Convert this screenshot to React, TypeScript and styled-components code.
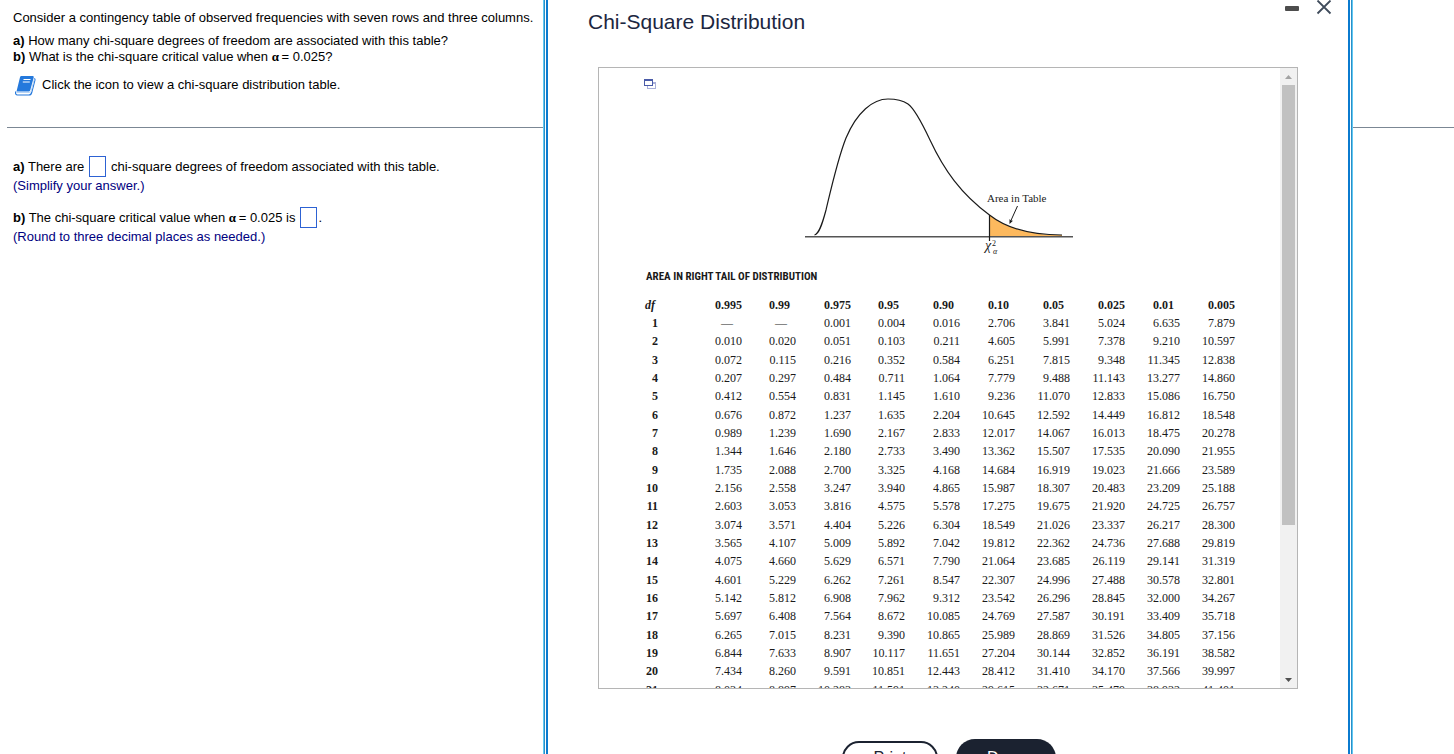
import React from "react";
import styled, { createGlobalStyle } from "styled-components";

const GlobalStyle = createGlobalStyle`
  *, *::before, *::after { box-sizing: border-box; }
  body { margin: 0; background: #fff; color: #000; font-family: "Liberation Sans", Arial, sans-serif; font-size: 13px; }
  p, h1, h2 { margin: 0; }
`;

const Page = styled.div`
  position: relative;
  height: 100vh;
  overflow: hidden;
`;

const Question = styled.section`
  height: 128px;
  margin-left: 7px;
  padding: 10px 0 0 6px;
  border-bottom: 1px solid #7b8794;
  line-height: 16px;
`;

const Prompt = styled.p`
  margin-bottom: 7px;
`;

const TableLink = styled.button`
  display: flex;
  align-items: flex-start;
  gap: 6px;
  margin-top: 11px;
  padding: 0 0 0 2px;
  border: 0;
  background: none;
  color: inherit;
  font: inherit;
  line-height: 18px;
  cursor: pointer;
`;

const Answers = styled.section`
  display: flex;
  flex-direction: column;
  gap: 12px;
  padding: 28px 0 0 13px;
`;

const AnswerLine = styled.label`
  display: flex;
  align-items: center;
  height: 21px;
  white-space: pre;
`;

const AnswerBox = styled.input`
  width: 17px;
  height: 21px;
  margin: 0 1px 0 5px;
  padding: 0;
  border: 1px solid #2d62d3;
  border-radius: 0;
  background: #fff;
  font: inherit;
`;

const Hint = styled.p`
  line-height: 18px;
  color: #000080;
`;

const Alpha = styled.span`
  font-family: "Liberation Serif", "Times New Roman", serif;
  font-size: 13px;
  font-weight: 700;
`;

const Overlay = styled.div`
  position: absolute;
  inset: 0;
  display: flex;
  padding: 0 101px 0 543px;
  pointer-events: none;
`;

const Dialog = styled.div`
  flex: 1;
  display: flex;
  flex-direction: column;
  min-width: 0;
  padding: 0 2px;
  border: solid #62c8f2;
  border-width: 0 1px;
  background: #fff;
  box-shadow: inset 1px 0 #2a8fc8, inset -1px 0 #2a8fc8;
  pointer-events: auto;
`;

const DialogFrame = styled.div`
  flex: 1;
  display: flex;
  flex-direction: column;
  padding: 0 50px;
  border: solid #0b7bcf;
  border-width: 0 2px;
`;

const DialogHeader = styled.header`
  display: flex;
  justify-content: space-between;
  height: 67px;
  margin: 0 -35px 0 -10px;
`;

const Title = styled.h1`
  padding-top: 8px;
  font-size: 21px;
  font-weight: 400;
  line-height: 28px;
  color: #1c2640;
`;

const WindowButtons = styled.div`
  display: flex;
  align-items: flex-start;
  gap: 17px;
  padding-right: 1px;
`;

const IconButton = styled.button`
  display: flex;
  padding: 0;
  border: 0;
  background: none;
  cursor: pointer;
`;

const Viewer = styled.div`
  display: flex;
  height: 622px;
  border: 1px solid #b5b5b5;
`;

const Sheet = styled.div`
  flex: 1;
  min-width: 0;
  overflow: hidden;
  padding: 11px 0 0 45px;
  color: #1a1a1a;
  font-family: "Liberation Serif", "Times New Roman", serif;
`;

const Chart = styled.svg`
  display: block;
  margin-left: 160px;
`;

const TableTitle = styled.h2`
  margin: 9px 0 10px 2px;
  font-family: "Roboto Condensed", "Arial Narrow", sans-serif;
  font-size: 11px;
  line-height: 18px;
`;

const DataTable = styled.table`
  border-collapse: collapse;
  table-layout: fixed;
  width: 591px;
  font-size: 12px;
  line-height: 18px;

  tr { height: 18px; }
  tbody tr:nth-child(3n) { height: 19px; }
`;

const HeadCell = styled.th`
  padding: 0;
  text-align: right;

  span {
    display: inline-block;
    width: 27px;
    text-align: left;
  }
`;

const DfHead = styled.th`
  padding: 0 0 0 1px;
  text-align: left;
  font-style: italic;
`;

const DfCell = styled.th`
  padding: 0;
  text-align: right;
`;

const Cell = styled.td`
  padding: 0;
  text-align: right;
`;

const Dash = styled.td`
  padding: 0 9px 0 0;
  text-align: right;
`;

const Scrollbar = styled.div`
  display: flex;
  flex-direction: column;
  align-items: center;
  width: 17px;
  background: #f1f1f1;
`;

const ScrollButton = styled.button`
  display: flex;
  align-items: center;
  justify-content: center;
  width: 17px;
  height: 17px;
  padding: 0;
  border: 0;
  background: none;
`;

const ScrollTrack = styled.div`
  flex: 1;
  width: 13px;
`;

const ScrollThumb = styled.div`
  height: 75%;
  background: #c1c1c1;
`;

const Actions = styled.footer`
  display: flex;
  justify-content: center;
  align-items: center;
  gap: 18px;
  margin-top: 50px;
  padding-left: 2px;
`;

const ActionButton = styled.button<{ $primary?: boolean }>`
  width: ${(p) => (p.$primary ? 100 : 96)}px;
  height: ${(p) => (p.$primary ? 38 : 34)}px;
  border: ${(p) => (p.$primary ? "0" : "2px solid #1b2230")};
  border-radius: 19px;
  background: ${(p) => (p.$primary ? "#1b2230" : "#fff")};
  color: ${(p) => (p.$primary ? "#fff" : "#1b2230")};
  font-family: inherit;
  font-size: 16px;
  line-height: 20px;
  cursor: pointer;
`;

const areas = ["0.995", "0.99", "0.975", "0.95", "0.90", "0.10", "0.05", "0.025", "0.01", "0.005"];
const columnWidths = [84, 54, 55, 54, 55, 55, 55, 55, 55, 55];

const rows = `— — 0.001 0.004 0.016 2.706 3.841 5.024 6.635 7.879
0.010 0.020 0.051 0.103 0.211 4.605 5.991 7.378 9.210 10.597
0.072 0.115 0.216 0.352 0.584 6.251 7.815 9.348 11.345 12.838
0.207 0.297 0.484 0.711 1.064 7.779 9.488 11.143 13.277 14.860
0.412 0.554 0.831 1.145 1.610 9.236 11.070 12.833 15.086 16.750
0.676 0.872 1.237 1.635 2.204 10.645 12.592 14.449 16.812 18.548
0.989 1.239 1.690 2.167 2.833 12.017 14.067 16.013 18.475 20.278
1.344 1.646 2.180 2.733 3.490 13.362 15.507 17.535 20.090 21.955
1.735 2.088 2.700 3.325 4.168 14.684 16.919 19.023 21.666 23.589
2.156 2.558 3.247 3.940 4.865 15.987 18.307 20.483 23.209 25.188
2.603 3.053 3.816 4.575 5.578 17.275 19.675 21.920 24.725 26.757
3.074 3.571 4.404 5.226 6.304 18.549 21.026 23.337 26.217 28.300
3.565 4.107 5.009 5.892 7.042 19.812 22.362 24.736 27.688 29.819
4.075 4.660 5.629 6.571 7.790 21.064 23.685 26.119 29.141 31.319
4.601 5.229 6.262 7.261 8.547 22.307 24.996 27.488 30.578 32.801
5.142 5.812 6.908 7.962 9.312 23.542 26.296 28.845 32.000 34.267
5.697 6.408 7.564 8.672 10.085 24.769 27.587 30.191 33.409 35.718
6.265 7.015 8.231 9.390 10.865 25.989 28.869 31.526 34.805 37.156
6.844 7.633 8.907 10.117 11.651 27.204 30.144 32.852 36.191 38.582
7.434 8.260 9.591 10.851 12.443 28.412 31.410 34.170 37.566 39.997
8.034 8.897 10.283 11.591 13.240 29.615 32.671 35.479 38.932 41.401`
  .split("\n")
  .map((line) => line.split(" "));

const BookIcon = () => (
  <svg width="21" height="20" viewBox="0 0 21 20" aria-hidden="true">
    <path d="M6.500 0H17.500C18.500 0 19 .7 18.700 1.600L15.300 14C15 15 14.300 15.500 13.500 15.500H1.500L5 1.300C5.200.5 5.800 0 6.500 0Z" fill="#2579dc" />
    <path d="M19.300 2.500C20 3 20.100 3.500 19.900 4.200L16.700 16.500C16.300 18.200 15.500 19 14 19H2.500C.9 19 .1 17.500.8 15.500" fill="none" stroke="#2579dc" strokeWidth="1.200" />
    <path d="M1.500 16.500H14C15.200 16.500 16 16 16.300 14.800L19.200 3.500" fill="none" stroke="#b9d5f5" strokeWidth="1" />
    <path d="M8.500 3.500h7M7.800 6h7" stroke="#fff" strokeWidth="1.200" />
  </svg>
);

const PopupIcon = () => (
  <svg width="12" height="10" viewBox="0 0 12 10" shapeRendering="crispEdges" aria-hidden="true">
    <path d="M3 3h9v7H3Z" fill="#aab0da" />
    <path d="M4 5h7v4H4Z" fill="#fff" />
    <path d="M0 0h9v7H0Z" fill="#4a5ba8" />
    <path d="M1 2h7v4H1Z" fill="#fff" />
  </svg>
);

const DistributionChart = () => (
  <Chart width="270" height="170" viewBox="804 89 270 170" role="img" aria-label="Chi-square curve with shaded right tail">
    <path d="M989.500 215C1006 228 1030 235 1062 235V236.500H989.500Z" fill="#fdb95e" />
    <path
      d="M814.500 235C819 234 822 225 826 210C831 189 838 158 846 138C857 112 873 99 888 99C896 99 902 100 908 104C915 109 922 123 930 140C944 170 961 194 989.500 215C1006 228 1030 235 1062 235"
      fill="none" stroke="#1a1a1a" strokeWidth="1.200"
    />
    <path d="M805 236.700H1073" stroke="#555" strokeWidth="1.500" />
    <path d="M989.500 215V241" stroke="#1a1a1a" strokeWidth="1.200" />
    <path d="M1017.500 206 1010.500 221.500" stroke="#1a1a1a" />
    <path d="M1009.500 224V219L1010.800 220.500 1013 220.800Z" fill="#1a1a1a" />
    <text x="987" y="202" fontSize="11" fill="#1a1a1a">Area in Table</text>
    <text x="985" y="250" fontSize="14" fontStyle="italic" fill="#1a1a1a">χ</text>
    <text x="992" y="246" fontSize="8" fill="#1a1a1a">2</text>
    <text x="993" y="254" fontSize="8" fontStyle="italic" fill="#1a1a1a">α</text>
  </Chart>
);

export default function App() {
  return (
    <Page>
      <GlobalStyle />
      <main>
        <Question>
          <Prompt>Consider a contingency table of observed frequencies with seven rows and three columns.</Prompt>
          <p><b>a)</b> How many chi-square degrees of freedom are associated with this table?</p>
          <p><b>b)</b> What is the chi-square critical value when <Alpha>α</Alpha>&thinsp;= 0.025?</p>
          <TableLink type="button">
            <BookIcon />
            Click the icon to view a chi-square distribution table.
          </TableLink>
        </Question>
        <Answers>
          <div>
            <AnswerLine>
              <span><b>a)</b> There are</span>
              <AnswerBox type="text" />
              <span>{" "}chi-square degrees of freedom associated with this table.</span>
            </AnswerLine>
            <Hint>(Simplify your answer.)</Hint>
          </div>
          <div>
            <AnswerLine>
              <span><b>b)</b> The chi-square critical value when <Alpha>α</Alpha>&thinsp;= 0.025 is</span>
              <AnswerBox type="text" />
              <span>.</span>
            </AnswerLine>
            <Hint>(Round to three decimal places as needed.)</Hint>
          </div>
        </Answers>
      </main>

      <Overlay>
        <Dialog role="dialog" aria-labelledby="dialog-title">
          <DialogFrame>
            <DialogHeader>
              <Title id="dialog-title">Chi-Square Distribution</Title>
              <WindowButtons>
                <IconButton type="button" aria-label="Minimize">
                  <svg width="15" height="15" viewBox="0 0 15 15"><rect x="1" y="6" width="14" height="5" rx="1" fill="#4d4d4d" /></svg>
                </IconButton>
                <IconButton type="button" aria-label="Close">
                  <svg width="16" height="15" viewBox="0 0 16 15"><path d="m1.500.5 13 13m0-13-13 13" stroke="#3f4b5b" strokeWidth="1.800" /></svg>
                </IconButton>
              </WindowButtons>
            </DialogHeader>

            <Viewer>
              <Sheet>
                <IconButton type="button" aria-label="Open in a new window"><PopupIcon /></IconButton>
                <DistributionChart />
                <TableTitle>AREA IN RIGHT TAIL OF DISTRIBUTION</TableTitle>
                <DataTable>
                  <colgroup>
                    <col width={14} />
                    {columnWidths.map((w, i) => <col key={i} width={w} />)}
                  </colgroup>
                  <thead>
                    <tr>
                      <DfHead scope="col">df</DfHead>
                      {areas.map((a) => <HeadCell key={a} scope="col"><span>{a}</span></HeadCell>)}
                    </tr>
                  </thead>
                  <tbody>
                    {rows.map((values, i) => (
                      <tr key={i}>
                        <DfCell scope="row">{i + 1}</DfCell>
                        {values.map((v, j) => (v === "—" ? <Dash key={j}>{v}</Dash> : <Cell key={j}>{v}</Cell>))}
                      </tr>
                    ))}
                  </tbody>
                </DataTable>
              </Sheet>
              <Scrollbar>
                <ScrollButton type="button" aria-label="Scroll up">
                  <svg width="7" height="4" viewBox="0 0 7 4"><path d="M0 4 3.500 0 7 4Z" fill="#a3a3a3" /></svg>
                </ScrollButton>
                <ScrollTrack><ScrollThumb /></ScrollTrack>
                <ScrollButton type="button" aria-label="Scroll down">
                  <svg width="7" height="4" viewBox="0 0 7 4"><path d="M0 0 3.500 4 7 0Z" fill="#505050" /></svg>
                </ScrollButton>
              </Scrollbar>
            </Viewer>

            <Actions>
              <ActionButton type="button">Print</ActionButton>
              <ActionButton type="button" $primary>Done</ActionButton>
            </Actions>
          </DialogFrame>
        </Dialog>
      </Overlay>
    </Page>
  );
}
